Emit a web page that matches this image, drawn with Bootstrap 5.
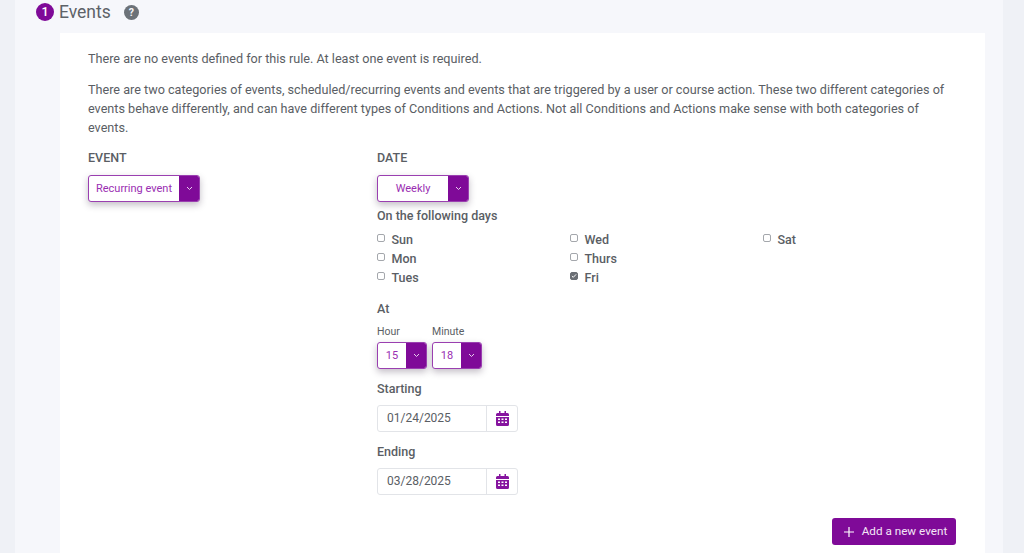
<!DOCTYPE html>
<html lang="en">
<head>
    <meta charset="UTF-8">
    <meta name="viewport" content="width=device-width, initial-scale=1.0">
    <title>Events</title>
    <link href="https://cdn.jsdelivr.net/npm/bootstrap@5.3.0/dist/css/bootstrap.min.css" rel="stylesheet">
    <style>
        html, body {
            height: 553px;
            overflow: hidden;
        }
        body {
            background: #eff1f6;
            font-family: Roboto, "Liberation Sans", sans-serif;
            font-size: 12.63px;
            line-height: 19px;
            color: #5a5e64;
            padding: 0 21px 0 15px;
        }
        .rule-panel {
            background: #f6f7fb;
            height: 553px;
            padding: 0 18px 0 21px;
        }
        .step-head {
            height: 33px;
            padding-bottom: 9px;
        }
        .step-num {
            width: 18px;
            height: 18px;
            background: #7f0a98;
            color: #fff;
            font-size: 12.5px;
            font-weight: 500;
            line-height: 18px;
            text-align: center;
            border-radius: 50%;
        }
        .step-title {
            font-size: 17.5px;
            margin-left: 5px;
            margin-right: 13px;
            color: #5d6268;
        }
        .help-dot {
            width: 15px;
            height: 15px;
            background: #6c7278;
            color: #f6f7fb;
            font-size: 10.5px;
            font-weight: 700;
            line-height: 15px;
            text-align: center;
            border-radius: 50%;
        }
        .rule-body {
            background: #fff;
            margin-left: 24px;
            padding: 16px 29px 0 28px;
            height: 520px;
        }
        .rule-body p {
            margin-bottom: 12px;
        }
        .rule-body p:last-of-type {
            margin-bottom: 10px;
        }
        .field-title {
            font-size: 12.5px;
            font-weight: 500;
            height: 19px;
            margin-top: 1px;
            margin-bottom: 8px;
        }
        .pick {
            display: inline-flex;
            height: 27px;
            border: 1px solid #9a3fb0;
            border-radius: 3px;
            background: #fff;
            box-shadow: 0 3px 7px rgba(40, 20, 50, .28);
            color: #9a2eb2;
            font-size: 11px;
            line-height: 25px;
        }
        .pick-text {
            text-align: center;
        }
        .pick-arrow {
            width: 20px;
            background: #7f0a98;
            display: flex;
            align-items: center;
            justify-content: center;
            border-radius: 0 2px 2px 0;
        }
        .day-grid {
            display: grid;
            grid-template-columns: repeat(3, 193px);
            grid-template-rows: repeat(3, 19px);
            grid-auto-flow: column;
            margin-top: 5px;
        }
        .day-item {
            display: flex;
            align-items: center;
            font-size: 12.5px;
            font-weight: 500;
            margin: 0;
        }
        .day-box {
            width: 8px;
            height: 8px;
            border: 1px solid #a4a7ac;
            border-radius: 2px;
            margin: -3px 6.5px 0 0;
            appearance: none;
            background: #fff;
            flex: none;
        }
        .day-box:checked {
            border-color: #6a6e74;
            background: #6a6e74 url("data:image/svg+xml,%3Csvg xmlns='http://www.w3.org/2000/svg' viewBox='0 0 8 8'%3E%3Cpath d='M1.2 4l1.800 1.800L6.800 1.800' fill='none' stroke='%23fff' stroke-width='1.300'/%3E%3C/svg%3E") center / 100% no-repeat;
        }
        .small-title {
            font-size: 10.5px;
            line-height: 14px;
            margin-bottom: 3px;
        }
        .date-box {
            width: 141px;
            height: 27px;
            border: 1px solid #e2e4e8;
            border-radius: 3px;
            display: flex;
        }
        .date-text {
            flex: 1;
            padding-left: 9px;
            font-size: 12px;
            line-height: 25px;
        }
        .date-icon {
            width: 31px;
            border-left: 1px solid #e2e4e8;
            display: flex;
            align-items: center;
            justify-content: center;
        }
        .add-btn {
            background: #7f0a98;
            color: #f3e6f6;
            border-radius: 3px;
            width: 124px;
            height: 27px;
            padding-left: 5px;
            font-size: 11.7px;
            line-height: 27px;
        }
        .event-col { width: 289px; }
        .date-col { flex: 1; }
        .recurring-text { width: 90px; }
        .weekly-text { width: 70px; }
        .time-text { width: 28px; }
        .following-title { margin-top: 4px; margin-bottom: 0; }
        .at-title { margin-top: 12px; margin-bottom: 0; }
        .time-row { gap: 5px; margin-top: 7px; }
        .starting-title { margin-top: 10px; margin-bottom: 7px; }
        .ending-title { margin-top: 10px; margin-bottom: 7px; }
        .add-row { margin-top: 23px; }
        .plus-icon { margin-left: -2px; margin-right: 8px; }
    </style>
</head>
<body>

<div class="rule-panel">
    <div class="step-head d-flex align-items-center">
        <span class="step-num">1</span>
        <span class="step-title">Events</span>
        <span class="help-dot">?</span>
    </div>

    <div class="rule-body">
        <p>There are no events defined for this rule. At least one event is required.</p>
        <p>There are two categories of events, scheduled/recurring events and events that are triggered by a user or course action. These two different categories of events behave differently, and can have different types of Conditions and Actions. Not all Conditions and Actions make sense with both categories of events.</p>

        <div class="d-flex">
            <div class="event-col">
                <div class="field-title">EVENT</div>
                <div class="pick">
                    <span class="pick-text recurring-text">Recurring event</span>
                    <span class="pick-arrow"><svg width="7" height="5" viewBox="0 0 7 5"><path d="M1 1l2.500 2.500L6 1" fill="none" stroke="#e8cfee" stroke-width="1"/></svg></span>
                </div>
            </div>
            <div class="date-col">
                <div class="field-title">DATE</div>
                <div class="pick">
                    <span class="pick-text weekly-text">Weekly</span>
                    <span class="pick-arrow"><svg width="7" height="5" viewBox="0 0 7 5"><path d="M1 1l2.500 2.500L6 1" fill="none" stroke="#e8cfee" stroke-width="1"/></svg></span>
                </div>

                <div class="field-title following-title">On the following days</div>
                <div class="day-grid">
                    <label class="day-item"><input class="day-box" type="checkbox">Sun</label>
                    <label class="day-item"><input class="day-box" type="checkbox">Mon</label>
                    <label class="day-item"><input class="day-box" type="checkbox">Tues</label>
                    <label class="day-item"><input class="day-box" type="checkbox">Wed</label>
                    <label class="day-item"><input class="day-box" type="checkbox">Thurs</label>
                    <label class="day-item"><input class="day-box" type="checkbox" checked>Fri</label>
                    <label class="day-item"><input class="day-box" type="checkbox">Sat</label>
                </div>

                <div class="field-title at-title">At</div>
                <div class="d-flex time-row">
                    <div>
                        <div class="small-title">Hour</div>
                        <div class="pick">
                            <span class="pick-text time-text">15</span>
                            <span class="pick-arrow"><svg width="7" height="5" viewBox="0 0 7 5"><path d="M1 1l2.500 2.500L6 1" fill="none" stroke="#e8cfee" stroke-width="1"/></svg></span>
                        </div>
                    </div>
                    <div>
                        <div class="small-title">Minute</div>
                        <div class="pick">
                            <span class="pick-text time-text">18</span>
                            <span class="pick-arrow"><svg width="7" height="5" viewBox="0 0 7 5"><path d="M1 1l2.500 2.500L6 1" fill="none" stroke="#e8cfee" stroke-width="1"/></svg></span>
                        </div>
                    </div>
                </div>

                <div class="field-title starting-title">Starting</div>
                <div class="date-box">
                    <span class="date-text">01/24/2025</span>
                    <span class="date-icon"><svg width="13" height="15" viewBox="0 0 13 15"><path fill="#86149f" fill-rule="evenodd" d="M3 0h1.500v2h4V0H10v2h1.500A1.500 1.500 0 0 1 13 3.500V5H0V3.500A1.500 1.500 0 0 1 1.500 2H3zM0 6h13v7.500A1.500 1.500 0 0 1 11.500 15h-10A1.500 1.500 0 0 1 0 13.500zm2 1.500V9h2V7.500zm3.500 0V9h2V7.500zm3.500 0V9h2V7.500zM2 10.500V12h2v-1.500zm3.500 0V12h2v-1.500zm3.500 0V12h2v-1.500z"/></svg></span>
                </div>

                <div class="field-title ending-title">Ending</div>
                <div class="date-box">
                    <span class="date-text">03/28/2025</span>
                    <span class="date-icon"><svg width="13" height="15" viewBox="0 0 13 15"><path fill="#86149f" fill-rule="evenodd" d="M3 0h1.500v2h4V0H10v2h1.500A1.500 1.500 0 0 1 13 3.500V5H0V3.500A1.500 1.500 0 0 1 1.500 2H3zM0 6h13v7.500A1.500 1.500 0 0 1 11.500 15h-10A1.500 1.500 0 0 1 0 13.500zm2 1.500V9h2V7.500zm3.500 0V9h2V7.500zm3.500 0V9h2V7.500zM2 10.500V12h2v-1.500zm3.500 0V12h2v-1.500zm3.500 0V12h2v-1.500z"/></svg></span>
                </div>
            </div>
        </div>

        <div class="d-flex justify-content-end add-row">
            <div class="add-btn d-flex align-items-center justify-content-center">
                <svg class="plus-icon" width="10" height="10" viewBox="0 0 10 10"><path d="M5 0v10M0 5h10" stroke="#fff" stroke-width="1.200"/></svg>
                Add a new event
            </div>
        </div>
    </div>
</div>

<script src="https://cdn.jsdelivr.net/npm/bootstrap@5.3.0/dist/js/bootstrap.bundle.min.js"></script>
</body>
</html>
